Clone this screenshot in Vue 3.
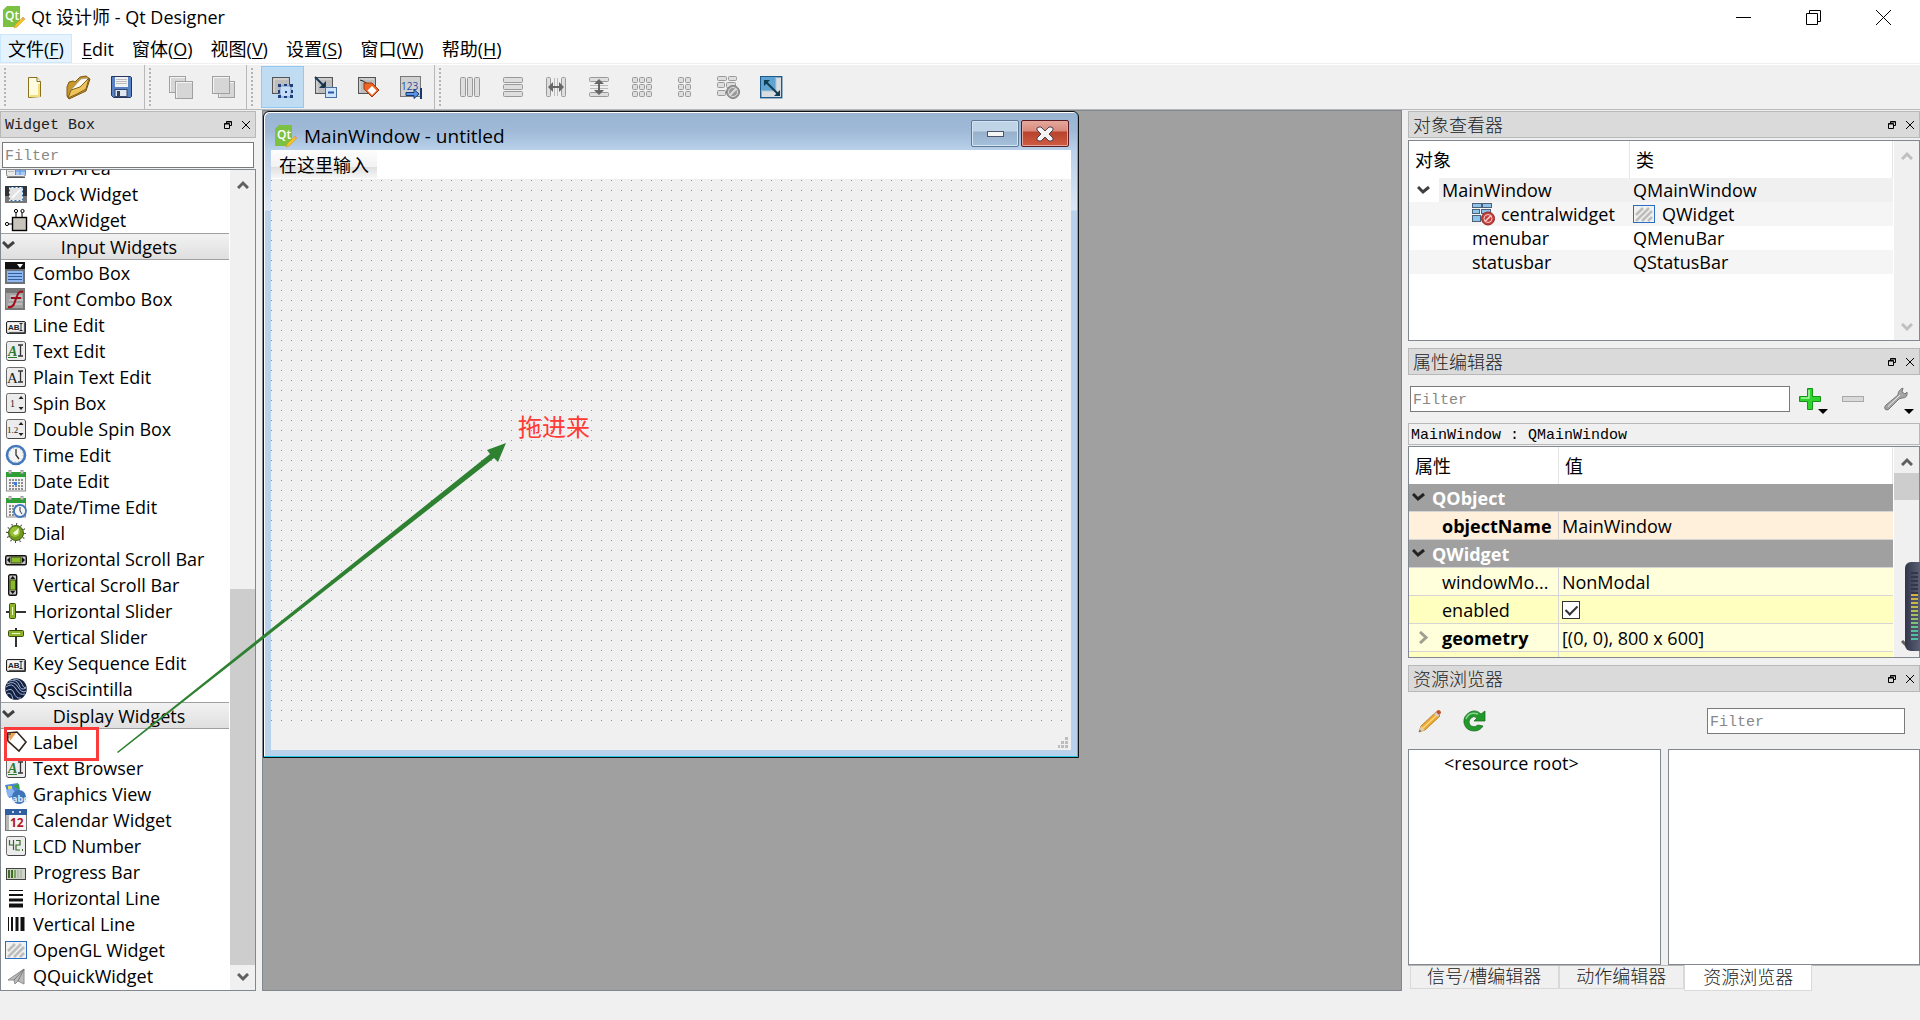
<script setup>
import { ref } from 'vue'

const abi = `<rect x="1.5" y="7.5" width="19" height="12" rx="1.5" fill="#cfcfcf" stroke="#222"/><rect x="2.5" y="8.5" width="16" height="9" fill="#f4f4f4"/><path d="M20 9v10H4" stroke="#333" stroke-width="1.5" fill="none"/><text x="3" y="16" font-size="8" font-weight="700" font-family="Liberation Sans, sans-serif" fill="#222">AB</text><path d="M14.5 9.5h3M16 9.5v7M14.5 16.5h3" stroke="#222"/>`
const page = `<rect x="1.5" y="1.5" width="19" height="19" rx="2" fill="#ececec" stroke="#6b6b6b"/><path d="M20.5 3v16.5q0 1-1 1H3" stroke="#444" fill="none"/>`
const cursor = `<path d="M13 5h5M15.5 5v11M13 16h5" stroke="#333" stroke-width="1.3" fill="none"/>`
const richText = page + `<text x="3" y="16" font-size="14" font-weight="700" font-style="italic" font-family="Liberation Serif, serif" fill="#2c7a32">A</text><path d="M3 17.5h9" stroke="#2c7a32"/>` + cursor
const spinArrows = `<path d="M13.5 7h5l-2.5-3zM13.5 15h5l-2.5 3z" fill="#222"/>`
const hatch = `<rect x=".5" y="2.5" width="21" height="17" fill="#f1f1ef" stroke="#2b6cc4"/><path d="M3 12l7-7M3 18L16 5M9 18L19 8M15 18l4-4" stroke="#bdbdbd" stroke-width="2.6"/>`
const calendar = `<rect x="1.5" y="4" width="19" height="17" fill="#f3f3f3" stroke="#8d8d8d"/><path d="M1 2h20v5H1z" fill="#2f9e35"/><path d="M5 0v4M17 0v4" stroke="#999" stroke-width="3"/><path d="M5 1v2M17 1v2" stroke="#eee"/><path d="M4 10h14M4 13h14M4 16h14M4 19h14" stroke="#8f8f8f" stroke-width="2" stroke-dasharray="2 1"/>`
const graySquare = (x, y, s) => `<rect x="${x + .5}" y="${y + .5}" width="${s}" height="${s}" fill="#d6d6d6" stroke="#a0a0a0"/><path d="M${x + 1.5} ${y + s}V${y + 1.5}H${x + s}" stroke="#f4f4f4" fill="none"/>`
const darkSquare = `<rect x="1.5" y="1.5" width="17" height="16" fill="#bdbdbd" stroke="#555"/><path d="M3 16V3h14" stroke="#ddd" fill="none"/>`
const cell = (x, y, w, h) => `<rect x="${x + .5}" y="${y + .5}" width="${w - 1}" height="${h - 1}" rx="1" fill="#dedede" stroke="#999"/>`
const cells = (xs, ys) => ys.map(y => xs.map(x => cell(x, y, 6, 6)).join('')).join('')

const icons = {
  qt: `<path d="M4 0h13v17l-4 4H0V4z" fill="#7cc142"/><text x="2" y="14" font-size="12" font-weight="600" font-family="Open Sans, sans-serif" fill="#fff">Qt</text><path d="M20 11l2 2-8 8-3 1 1-3z" fill="#f6c324" stroke="#c69214" stroke-width=".5"/><path d="M20 11l2 2-1 1-2-2z" fill="#d99"/>`,
  newFile: `<path d="M4.5 1.5H13l3.5 4v15l-12 1z" fill="#fffbe0" stroke="#8a6f1c"/><path d="M13 1.5v4h3.5" fill="#fff" stroke="#8a6f1c"/><path d="M15 8v12H6" stroke="#f2df7c" stroke-width="2" fill="none"/>`,
  open: `<path d="M0 11l2-5 4-1 2 1 5-5 6-1 4 3-4 12-17 8-2-3z" fill="#c8972c" stroke="#7d5a14"/><path d="M3 15L14 3l7-1-5 10-10 6z" fill="#fdfdf6" stroke="#999" stroke-width=".7"/><path d="M1 22l3-8 9-3 9-9-3 11-9 5z" fill="#edc35a" stroke="#85611a"/>`,
  save: `<path d="M1.5.5h19l1 1v19l-1 1h-17l-2-2z" fill="#5783c4" stroke="#26355c"/><rect x="5" y="1" width="13" height="10" fill="#f1f1f1"/><path d="M6 3.5h11M6 5.5h11M6 7.5h11" stroke="#bbb"/><rect x="5" y="13.5" width="12" height="7" fill="#dfe6f2" stroke="#33466f"/><rect x="7" y="15" width="3" height="5" fill="#345"/>`,
  lower: graySquare(0, 0, 16) + graySquare(6, 5, 17),
  raise: graySquare(6, 5, 16) + graySquare(0, 0, 17),
  widgets: darkSquare + `<rect x="9" y="10" width="11" height="11" fill="#c5dbf8" stroke="#7a9cc8"/><path d="M7 8h3v3H7zM19 8h3v3h-3zM7 19h3v3H7zM19 19h3v3h-3zM13 8h3v2h-3zM13 20h3v2h-3zM7 14h2v3H7zM20 14h2v3h-2zM14 15h2v2h-2z" fill="#1f3f7c"/>`,
  signals: darkSquare + `<path d="M1 1l10 10" stroke="#17354f" stroke-width="2"/><path d="M12 5v7H5z" fill="#17354f"/><rect x="11.5" y="11.5" width="11" height="10" fill="#cfe4ff" stroke="#496f9f"/><path d="M14 16.5h6" stroke="#2857a0" stroke-width="2"/>`,
  buddies: darkSquare + `<path d="M3 4l3 1 5 3" stroke="#222" fill="none"/><path d="M7 7h8l7 7-7 7-8-8z" fill="#ed6425" stroke="#9c3b10"/><path d="M15 10l4.5 4.5-4.5 4.5-4.5-4.5z" fill="#fff"/>`,
  taborder: `<rect x=".5" y=".5" width="20" height="20" fill="#d0d0d0" stroke="#777"/><text x="1" y="14" font-size="10" font-family="Open Sans, sans-serif" fill="#1c4ea0">123</text><path d="M6 16.5h8v-3l5 4.500-5 4.500v-3H6z" fill="#5a94e8" stroke="#16396f"/><path d="M21 12v11" stroke="#16396f" stroke-width="2"/>`,
  columns: cell(1, 1, 6, 20) + cell(8, 1, 6, 20) + cell(15, 1, 6, 20),
  rows: cell(1, 1, 20, 6) + cell(1, 8, 20, 6) + cell(1, 15, 20, 6),
  hsplit: cell(1, 1, 5, 20) + cell(16, 1, 5, 20) + `<path d="M9.5 2v18M12.5 2v18" stroke="#bbb"/><path d="M3 11l5-5v4h6V6l5 5-5 5v-4H8v4z" fill="#666"/>`,
  vsplit: cell(1, 1, 20, 5) + cell(1, 16, 20, 5) + `<path d="M2 9.5h18M2 12.5h18" stroke="#bbb"/><path d="M11 3l5 5h-4v6h4l-5 5-5-5h4V8H6z" fill="#666"/>`,
  grid: cells([1, 8, 15], [1, 8, 15]),
  form: cells([4, 11], [1, 8, 15]),
  breakLayout: cell(0, 0, 10, 5) + cell(11, 0, 9, 5) + cell(0, 6, 8, 6) + cell(9, 6, 10, 6) + cell(0, 14, 9, 6) + `<circle cx="16" cy="16" r="6.5" fill="#999" stroke="#808080"/><path d="M12.5 19.5l7-7" stroke="#ddd" stroke-width="2"/><circle cx="16" cy="16" r="4.5" stroke="#ddd" fill="none"/>`,
  adjust: `<rect x=".7" y=".7" width="21" height="21" fill="#d9dde0" stroke="#1c5a8c" stroke-width="1.4"/><rect x="1" y="1" width="15" height="14" fill="#5fa3d3"/><path d="M16 1v14H1" stroke="#b5c6d3" fill="none"/><path d="M6 6l12 12" stroke="#0f3d4f" stroke-width="2"/><path d="M4 4h6L4 10zM20 20v-6l-6 6z" fill="#0f3d4f"/>`,
  mdi: `<rect x="1.5" y="1.5" width="19" height="18" rx="2" fill="#e9e9e9" stroke="#888"/><rect x="10" y="9" width="10" height="9" fill="#a9c9f5"/><path d="M10.5 9v9M15 10v8M10 14h10" stroke="#5b8fd8"/><path d="M3 14.5h6" stroke="#bbb"/><path d="M2 20.5h18" stroke="#555"/>`,
  dock: `<rect y="3" width="22" height="17" fill="#303338"/><rect y="13" width="22" height="7" fill="#777"/><rect x="4.5" y="4.5" width="13" height="13" fill="#e2e2e2" stroke="#fff"/><rect x="4.5" y="4.5" width="13" height="13" fill="none" stroke="#2c6fb8" stroke-dasharray="2 2"/><path d="M7 15l8-8" stroke="#fafafa" stroke-width="2"/>`,
  ax: `<rect x="7.5" y="8.5" width="14" height="13" fill="#c9c4bb" stroke="#000" stroke-width="1.4"/><path d="M8 15H3M11 8V3M17 8V3" stroke="#000"/><circle cx="2" cy="15" r="1.6" fill="#fff" stroke="#000"/><circle cx="11" cy="2" r="1.6" fill="#fff" stroke="#000"/><circle cx="17.5" cy="2" r="1.6" fill="#fff" stroke="#000"/>`,
  combo: `<rect width="20" height="22" fill="#6d7278"/><rect width="20" height="7" fill="#111"/><path d="M12 2h6l-3 4z" fill="#fff"/><rect x="2" y="9" width="16" height="11" fill="#8db7ee"/><path d="M3 11.5h14M3 14.5h14M3 17.5h14" stroke="#315f9d"/>`,
  font: `<rect width="20" height="22" fill="#777"/><rect x="1" y="5" width="17" height="15" fill="#a2a2a2"/><path d="M5 8h12M4 12h14M3 16h14" stroke="#bcbcbc" stroke-width="2"/><path d="M18 4q-4-2-6 4l-3 8q-2 4-6 3M6 10h10" stroke="#a10d18" stroke-width="2" fill="none"/>`,
  abi,
  textEdit: richText,
  plain: page + `<text x="2" y="17" font-size="15" font-family="Liberation Serif, serif" fill="#222">A</text>` + cursor,
  spin: page + `<text x="5" y="15" font-size="10" font-family="Liberation Serif, serif" fill="#222">1</text>` + spinArrows,
  dspin: page + `<text x="2" y="15" font-size="9" font-family="Liberation Serif, serif" fill="#222">1.2</text>` + spinArrows,
  clock: `<circle cx="11" cy="11" r="9" fill="#f5f5f5" stroke="#4379bd" stroke-width="2.6"/><circle cx="11" cy="11" r="7" fill="none" stroke="#aaa" stroke-dasharray="1 2.7"/><path d="M11 5v6l3 4" stroke="#333" stroke-width="1.3" fill="none"/>`,
  date: calendar + `<rect x="9" y="12" width="3" height="3" fill="#3a7bea"/>`,
  datetime: calendar + `<circle cx="15" cy="15" r="6" fill="#f5f5f5" stroke="#4379bd" stroke-width="1.8"/><path d="M15 11v4l2 3" stroke="#333" fill="none"/>`,
  dial: `<circle cx="11" cy="11" r="9" fill="none" stroke="#444" stroke-width="2" stroke-dasharray="1 3.7"/><circle cx="11" cy="11" r="7.5" fill="#6f9a1e" stroke="#3f5c10"/><circle cx="10" cy="10" r="5" fill="#98c235"/><path d="M14 6l-1 6-3 1-2-2z" fill="#f5fbe0"/>`,
  hscroll: `<rect x=".7" y="7.7" width="20.6" height="9" rx="1.5" fill="#c8c8c8" stroke="#111" stroke-width="1.4"/><rect x="6" y="9" width="10" height="6" fill="#8bb92d" stroke="#3a4d12"/><path d="M2 12l3-3v6zM20 12l-3-3v6z" fill="#111"/>`,
  vscroll: `<rect x="3.7" y=".7" width="8" height="20.6" rx="1.5" fill="#c8c8c8" stroke="#111" stroke-width="1.4"/><rect x="5" y="6" width="5.5" height="10" fill="#8bb92d" stroke="#3a4d12"/><path d="M7.7 2l2.5 3h-5zM7.7 20l2.5-3h-5z" fill="#111"/>`,
  hslider: `<path d="M1 12h20" stroke="#333" stroke-width="2"/><rect x="4.5" y="3.5" width="6" height="15" rx="1" fill="#8eb52a" stroke="#3a4d12"/><path d="M7.5 7v8" stroke="#eef8cc"/>`,
  vslider: `<path d="M11 2v19" stroke="#333" stroke-width="2"/><rect x="3.5" y="4.5" width="15" height="6" rx="1" fill="#8eb52a" stroke="#3a4d12"/><path d="M7 7.5h8" stroke="#eef8cc"/>`,
  scintilla: `<circle cx="11" cy="11" r="10.8" fill="#14203d"/><path d="M1 9q6-5 10 2t9 5M2 6q7-4 11 3t8 4M4 3q8-2 10 4t7 3M1 13q6-4 8 2t7 5M2 16q4-3 6 5M8 1q7 0 9 5t4 3" stroke="#9db4dc" fill="none"/>`,
  label: `<path d="M2 2l10-1 9 10-7 9L3 10z" fill="#fff" stroke="#33261c" stroke-width="1.6"/><path d="M3 2l8 0-6 8z" fill="#f0a057"/><path d="M0 3h6M3 3v4" stroke="#222"/>`,
  graphics: `<path d="M0 2l13-2 2 12-11 3z" fill="#4f86d9"/><path d="M1 8l5-4 4 5-3 4-4 1z" fill="#8ab4ee"/><path d="M3 3h4v3H3z" fill="#e9dc3a"/><path d="M8 3l6-2 1 6z" fill="#37a53e"/><circle cx="14" cy="14" r="7" fill="#3d75b8"/><text x="7" y="19" font-size="9" font-weight="700" font-family="Open Sans, sans-serif" fill="#d9ebff">abc</text>`,
  calWidget: `<rect x=".5" y=".5" width="21" height="21" fill="#f6f6f6" stroke="#777"/><path d="M0 0h22v6H0z" fill="#2f5f9f"/><path d="M1 6h3v15H1z" fill="#b7b7b7"/><path d="M7 3h2M14 3h2" stroke="#fff" stroke-width="1.5"/><text x="5" y="18" font-size="12" font-weight="700" font-family="Open Sans, sans-serif" fill="#b3161b">12</text>`,
  lcd: page + `<path d="M4.5 5v5h4M8.5 5v10M11 5.5h4v4.5h-4v5h4" stroke="#376b2b" stroke-width="1.2" fill="none"/><path d="M17 14h1v2h-1z" fill="#376b2b"/>`,
  progress: `<rect x="1.5" y="7.5" width="19" height="11" fill="#cfd4c9" stroke="#444"/><path d="M4 9v8M7 9v8" stroke="#3f6f24" stroke-width="2"/><path d="M10 9v8" stroke="#7da364" stroke-width="2"/><path d="M13 9v8M16 9v8" stroke="#b5bfae" stroke-width="2"/>`,
  hline: `<path d="M4 3.5h14" stroke="#111"/><path d="M4 8h14" stroke="#111" stroke-width="2"/><path d="M4 13h14" stroke="#111" stroke-width="3"/><path d="M4 18.5h14" stroke="#111" stroke-width="4"/>`,
  vline: `<path d="M3.5 4v14" stroke="#111"/><path d="M7 4v14" stroke="#111" stroke-width="2"/><path d="M12 4v14" stroke="#111" stroke-width="3"/><path d="M17.5 4v14" stroke="#111" stroke-width="4"/>`,
  hatch,
  quick: `<path d="M3 15L19 4v15l-6-3-3 3-1-4z" fill="#bcbcbc" stroke="#8c8c8c"/><path d="M9 15L19 4l-6 12" fill="none" stroke="#777"/>`,
  central: `<g fill="#8fc4ea" stroke="#4b6079"><rect x=".5" y=".5" width="9" height="4"/><rect x="10.5" y=".5" width="9" height="4"/><rect x=".5" y="6.5" width="7" height="4"/><rect x="9.5" y="6.5" width="9" height="4"/><rect x=".5" y="12.5" width="8" height="6"/></g><circle cx="16" cy="15.5" r="6.5" fill="#c93e3a" stroke="#8e2522"/><circle cx="16" cy="15.5" r="4" fill="none" stroke="#f3d0cf"/><path d="M13 18.5l6-6" stroke="#f3d0cf" stroke-width="1.6"/>`,
  plus: `<path d="M8.5.5h5v8h8v5h-8v8h-5v-8h-8v-5h8z" fill="#2ed32e" stroke="#149414"/><path d="M10 2v8H2" stroke="#aef5a6" stroke-width="1.5" fill="none"/>`,
  minus: `<rect x=".5" y="8.5" width="21" height="5" fill="#d9d9d9" stroke="#a8a8a8"/>`,
  wrench: `<path d="M0 21q-1-2 1-4L13 7q0-5 5-7l-1 4 3 2 2-2q1 6-5 6l-3 1L4 21q-2 2-4 0z" fill="#a5a5a5" stroke="#777"/><path d="M3 18.5L15 7" stroke="#eee"/>`,
  pencil: `<path d="M0 22l2-6L17 2l4 4L6 20z" fill="#f0a92d" stroke="#9a6a15" stroke-width=".7"/><path d="M4 18L19 4" stroke="#fbd98a" stroke-width="1.3"/><path d="M15 4l4-4 3 3-3 4z" fill="#cfcfcf"/><path d="M17 2l2-2q3 0 3 3l-2 2z" fill="#c4532c"/><path d="M0 22l2-6 4 4z" fill="#e6cfa0"/><path d="M0 22l1-2 1 1z" fill="#333"/>`,
  refresh: `<path d="M18 4q-5-5-11-2Q0 6 1 13q2 8 10 8 6 0 9-5l-5-1q-3 3-7 1-4-4 0-8 3-3 6 0l-3 3h11V1z" fill="#229a2b" stroke="#116518" stroke-width=".7"/><path d="M3 9q3-8 12-5" stroke="#8fd493" fill="none" stroke-width="1.5"/>`
}

const menus = [['文件', 'F'], ['', 'E', 'dit'], ['窗体', 'O'], ['视图', 'V'], ['设置', 'S'], ['窗口', 'W'], ['帮助', 'H']]
const toolGroups = [
  ['newFile', 'open', 'save'],
  ['lower', 'raise'],
  ['widgets', 'signals', 'buddies', 'taborder'],
  ['columns', 'rows', 'hsplit', 'vsplit', 'grid', 'form', 'breakLayout', 'adjust']
]
const widgets = [
  { name: 'MDI Area', icon: 'mdi' }, { name: 'Dock Widget', icon: 'dock' }, { name: 'QAxWidget', icon: 'ax' },
  { name: 'Input Widgets', group: true },
  { name: 'Combo Box', icon: 'combo' }, { name: 'Font Combo Box', icon: 'font' }, { name: 'Line Edit', icon: 'abi' },
  { name: 'Text Edit', icon: 'textEdit' }, { name: 'Plain Text Edit', icon: 'plain' }, { name: 'Spin Box', icon: 'spin' },
  { name: 'Double Spin Box', icon: 'dspin' }, { name: 'Time Edit', icon: 'clock' }, { name: 'Date Edit', icon: 'date' },
  { name: 'Date/Time Edit', icon: 'datetime' }, { name: 'Dial', icon: 'dial' }, { name: 'Horizontal Scroll Bar', icon: 'hscroll' },
  { name: 'Vertical Scroll Bar', icon: 'vscroll' }, { name: 'Horizontal Slider', icon: 'hslider' }, { name: 'Vertical Slider', icon: 'vslider' },
  { name: 'Key Sequence Edit', icon: 'abi' }, { name: 'QsciScintilla', icon: 'scintilla' },
  { name: 'Display Widgets', group: true },
  { name: 'Label', icon: 'label' }, { name: 'Text Browser', icon: 'textEdit' }, { name: 'Graphics View', icon: 'graphics' },
  { name: 'Calendar Widget', icon: 'calWidget' }, { name: 'LCD Number', icon: 'lcd' }, { name: 'Progress Bar', icon: 'progress' },
  { name: 'Horizontal Line', icon: 'hline' }, { name: 'Vertical Line', icon: 'vline' }, { name: 'OpenGL Widget', icon: 'hatch' },
  { name: 'QQuickWidget', icon: 'quick' }
]
const tabs = ['信号/槽编辑器', '动作编辑器', '资源浏览器']
const activeTab = ref('资源浏览器')
const enabled = ref(true)
const widgetFilter = ref('')
const propertyFilter = ref('')
const resourceFilter = ref('')
</script>

<template>
  <div class="designer">
    <header class="titlebar">
      <svg class="icon" viewBox="0 0 22 22" v-html="icons.qt"></svg>
      <h1>Qt 设计师 - Qt Designer</h1>
      <div class="controls">
        <button type="button" aria-label="Minimize"><svg width="15" height="15"><path d="M0 7.5h15" /></svg></button>
        <button type="button" aria-label="Restore"><svg width="15" height="15"><path d="M.5 3.5h11v11H.5zM3.5 3.5V.5h11v11h-3" /></svg></button>
        <button type="button" aria-label="Close"><svg width="15" height="15"><path d="M0 0l15 15M15 0L0 15" /></svg></button>
      </div>
    </header>

    <nav class="menubar">
      <button v-for="(m, i) in menus" :key="i" type="button" :class="{ hot: i === 0 }">
        <template v-if="m[0]">{{ m[0] }}(<u>{{ m[1] }}</u>)</template>
        <template v-else><u>{{ m[1] }}</u>{{ m[2] }}</template>
      </button>
    </nav>

    <div class="toolbar">
      <div v-for="(g, gi) in toolGroups" :key="gi" class="tool-group">
        <button v-for="t in g" :key="t" type="button" :aria-label="t" :class="{ checked: t === 'widgets' }">
          <svg class="icon" viewBox="0 0 22 22" v-html="icons[t]"></svg>
        </button>
      </div>
    </div>

    <main class="workspace">
      <aside class="left-dock">
        <div class="dock-title mono">
          <h2>Widget Box</h2>
          <button type="button" aria-label="Float"><svg width="8" height="8"><path d="M2.5 2V.5h5v4H6M.5 2.5h5v5h-5zM.5 3h5M2.5 1h5" /></svg></button>
          <button type="button" aria-label="Close"><svg width="8" height="8"><path d="M0 0l8 8M8 0L0 8" /></svg></button>
        </div>
        <input v-model="widgetFilter" class="filter mono" type="text" placeholder="Filter" aria-label="Widget filter">
        <div class="widget-box">
          <ul class="widget-list">
            <li v-for="w in widgets" :key="w.name" :class="{ group: w.group }">
              <svg v-if="w.group" class="chevron" viewBox="0 0 13 9"><path d="M1 1l5 5 6-5" /></svg>
              <svg v-else class="icon" viewBox="0 0 22 22" v-html="icons[w.icon]"></svg>
              <span>{{ w.name }}</span>
            </li>
          </ul>
          <div class="scroll">
            <svg class="arrow" viewBox="0 0 12 9"><path d="M1 8l5-5 5 5" /></svg>
            <div class="track low"><div class="thumb"></div></div>
            <svg class="arrow" viewBox="0 0 12 9"><path d="M1 1l5 5 5-5" /></svg>
          </div>
        </div>
      </aside>

      <section class="mdi-area">
        <div class="form-window">
          <div class="form-title">
            <svg class="icon" viewBox="0 0 22 22" v-html="icons.qt"></svg>
            <h2>MainWindow - untitled</h2>
            <button class="aero" type="button" aria-label="Minimize form"><svg width="17" height="6"><rect x=".5" y=".5" width="16" height="5" fill="#f5f5f5" stroke="#4b5566" /></svg></button>
            <button class="aero close" type="button" aria-label="Close form"><svg width="18" height="16" viewBox="0 0 18 16"><path d="M1 2L3 1h2l4 4 4-4h2l2 1v2l-4 4 4 4v2l-2 1h-2l-4-4-4 4H3l-2-1v-2l4-4-4-4z" fill="#f3f3f3" stroke="#4b3f52" /></svg></button>
          </div>
          <div class="form-menu"><button type="button">在这里输入</button></div>
          <div class="form-canvas"></div>
          <div class="form-status">
            <svg width="10" height="11"><path d="M7 0h3v3H7zM3 4h3v3H3zM7 4h3v3H7zM0 8h2v3H0zM3 8h3v3H3zM7 8h3v3H7z" fill="#bdbdbd" /></svg>
          </div>
        </div>
      </section>

      <aside class="right-dock">
        <div class="dock-title">
          <h2>对象查看器</h2>
          <button type="button" aria-label="Float"><svg width="8" height="8"><path d="M2.5 2V.5h5v4H6M.5 2.5h5v5h-5zM.5 3h5M2.5 1h5" /></svg></button>
          <button type="button" aria-label="Close"><svg width="8" height="8"><path d="M0 0l8 8M8 0L0 8" /></svg></button>
        </div>
        <div class="view inspector">
          <table>
            <colgroup><col class="c-object"><col></colgroup>
            <thead><tr><th>对象</th><th>类</th></tr></thead>
            <tbody>
              <tr class="current">
                <td class="root"><div class="cell"><svg class="chevron" viewBox="0 0 13 9"><path d="M1 1l5 5 6-5" /></svg>MainWindow</div></td>
                <td><div class="cell">QMainWindow</div></td>
              </tr>
              <tr class="alt">
                <td class="child"><div class="cell"><svg class="icon" viewBox="0 0 22 22" v-html="icons.central"></svg>centralwidget</div></td>
                <td><div class="cell"><svg class="icon" viewBox="0 0 22 22" v-html="icons.hatch"></svg>QWidget</div></td>
              </tr>
              <tr><td class="child"><div class="cell">menubar</div></td><td><div class="cell">QMenuBar</div></td></tr>
              <tr class="alt"><td class="child"><div class="cell">statusbar</div></td><td><div class="cell">QStatusBar</div></td></tr>
            </tbody>
          </table>
          <div class="scroll disabled">
            <svg class="arrow" viewBox="0 0 12 9"><path d="M1 8l5-5 5 5" /></svg>
            <svg class="arrow" viewBox="0 0 12 9"><path d="M1 1l5 5 5-5" /></svg>
          </div>
        </div>

        <div class="dock-title spaced">
          <h2>属性编辑器</h2>
          <button type="button" aria-label="Float"><svg width="8" height="8"><path d="M2.5 2V.5h5v4H6M.5 2.5h5v5h-5zM.5 3h5M2.5 1h5" /></svg></button>
          <button type="button" aria-label="Close"><svg width="8" height="8"><path d="M0 0l8 8M8 0L0 8" /></svg></button>
        </div>
        <div class="prop-tools">
          <input v-model="propertyFilter" class="filter mono" type="text" placeholder="Filter" aria-label="Property filter">
          <button type="button" aria-label="Add property"><svg class="icon" viewBox="0 0 22 22" v-html="icons.plus"></svg><i class="drop"></i></button>
          <button type="button" aria-label="Remove property"><svg class="icon" viewBox="0 0 22 22" v-html="icons.minus"></svg></button>
          <button type="button" aria-label="Configure"><svg class="icon" viewBox="0 0 22 22" v-html="icons.wrench"></svg><i class="drop"></i></button>
        </div>
        <p class="object-line mono">MainWindow : QMainWindow</p>
        <div class="view properties">
          <table>
            <colgroup><col class="c-prop"><col></colgroup>
            <thead><tr><th>属性</th><th>值</th></tr></thead>
            <tbody>
              <tr class="section"><td colspan="2"><div class="cell"><svg class="chevron" viewBox="0 0 13 9"><path d="M1 1l5 5 6-5" /></svg>QObject</div></td></tr>
              <tr class="peach"><td class="name"><b>objectName</b></td><td>MainWindow</td></tr>
              <tr class="section"><td colspan="2"><div class="cell"><svg class="chevron" viewBox="0 0 13 9"><path d="M1 1l5 5 6-5" /></svg>QWidget</div></td></tr>
              <tr class="pale"><td class="name">windowMo...</td><td>NonModal</td></tr>
              <tr class="yellow"><td class="name"><label for="enabled">enabled</label></td><td><input id="enabled" v-model="enabled" type="checkbox"></td></tr>
              <tr class="pale"><td class="expandable"><div class="cell"><svg class="chevron side" viewBox="0 0 9 13"><path d="M1 1l6 5.5L1 12" /></svg><b>geometry</b></div></td><td>[(0, 0), 800 x 600]</td></tr>
              <tr class="yellow"><td></td><td></td></tr>
            </tbody>
          </table>
          <div class="scroll">
            <svg class="arrow" viewBox="0 0 12 9"><path d="M1 8l5-5 5 5" /></svg>
            <div class="track"><div class="thumb short"></div></div>
            <svg class="arrow" viewBox="0 0 12 9"><path d="M1 1l5 5 5-5" /></svg>
          </div>
          <div class="meter"><div class="bars"></div><div class="bars lit"></div></div>
        </div>

        <div class="dock-title spaced">
          <h2>资源浏览器</h2>
          <button type="button" aria-label="Float"><svg width="8" height="8"><path d="M2.5 2V.5h5v4H6M.5 2.5h5v5h-5zM.5 3h5M2.5 1h5" /></svg></button>
          <button type="button" aria-label="Close"><svg width="8" height="8"><path d="M0 0l8 8M8 0L0 8" /></svg></button>
        </div>
        <div class="res-tools">
          <button type="button" aria-label="Edit resources"><svg class="icon" viewBox="0 0 22 22" v-html="icons.pencil"></svg></button>
          <button type="button" aria-label="Reload"><svg class="icon" viewBox="0 0 22 22" v-html="icons.refresh"></svg></button>
          <input v-model="resourceFilter" class="filter mono" type="text" placeholder="Filter" aria-label="Resource filter">
        </div>
        <div class="res-panes">
          <div class="view">&lt;resource root&gt;</div>
          <div class="view"></div>
        </div>
        <div class="tabs" role="tablist">
          <button v-for="t in tabs" :key="t" type="button" role="tab" :aria-selected="t === activeTab" :class="{ active: t === activeTab }" @click="activeTab = t">{{ t }}</button>
        </div>
      </aside>
    </main>

    <div class="mark-box"></div>
    <svg class="mark-arrow" width="520" height="770" viewBox="0 0 520 770"><path d="M117 752L490 454L487 450L506 443L498 462L494 458L118 753z" fill="#2f8132" /></svg>
    <strong class="mark-text">拖进来</strong>
  </div>
</template>

<style>
body { margin: 0; background: #f0f0f0; }
</style>

<style scoped>
* { box-sizing: border-box; }
.designer {
  position: relative;
  display: flex;
  flex-direction: column;
  min-height: 100vh;
  padding-bottom: 29px;
  overflow: hidden;
  background: #f0f0f0;
  color: #000;
  font: 18px/24px "Open Sans", "Noto Sans CJK SC", sans-serif;
}
button { border: 0; padding: 0; background: none; font: inherit; color: inherit; display: flex; align-items: center; justify-content: center; }
h1, h2, p, ul { margin: 0; padding: 0; font: inherit; list-style: none; }
svg { display: block; flex: none; }
.icon { width: 22px; height: 22px; overflow: visible; }
.mono { font-family: "Liberation Mono", "Noto Sans CJK SC", monospace; font-size: 15px; }

.titlebar { display: flex; align-items: center; height: 34px; padding-left: 3px; background: #fff; }
.titlebar h1 { flex: 1; margin-left: 6px; }
.controls { display: flex; height: 34px; padding-right: 2px; }
.controls button { width: 70px; }
.controls svg { stroke: #000; fill: none; }

.menubar { display: flex; gap: 2px; height: 30px; background: #fff; border-bottom: 1px solid #f0f0f0; }
.menubar button { display: block; padding: 0 7px; height: 29px; line-height: 29px; border: 1px solid transparent; white-space: nowrap; }
.menubar .hot { background: #e5f3ff; border-color: #cce8ff; }
.menubar u { text-underline-offset: 2px; text-decoration-thickness: 1px; }

.toolbar { display: flex; height: 46px; border-top: 1px solid #fff; border-bottom: 1px solid #b8b8b8; }
.tool-group { position: relative; display: flex; padding: 1px 1px 1px 14px; border-right: 1px solid #b8b8b8; }
.tool-group:last-child { border-right: 0; }
.tool-group::before {
  content: ""; position: absolute; left: 4px; top: 3px; bottom: 3px; width: 2px;
  background: repeating-linear-gradient(#b4b4b4 0 2px, transparent 2px 4px);
}
.tool-group button { width: 43px; padding-right: 1px; border: 1px solid transparent; }
.tool-group .checked { background: #c0dcf3; border-color: #90c8f6; }

.workspace { flex: 1; display: flex; }
.left-dock { display: flex; flex-direction: column; width: 256px; padding-top: 1px; }
.dock-title { display: flex; align-items: center; gap: 10px; height: 27px; padding: 0 5px 0 4px; border: 1px solid #b8b8b8; background: #dadada; color: #222; font-weight: 300; }
.dock-title.mono { font-weight: 400; }
.dock-title.mono h2 { padding-top: 3px; }
.dock-title.spaced { margin-top: 7px; }
.dock-title h2 { flex: 1; }
.dock-title button svg { stroke: #000; stroke-width: 1; fill: none; }
.filter { height: 26px; border: 1px solid #7a7a7a; border-radius: 0; padding: 3px 2px 0; background: #fff; min-width: 0; outline: 0; }
.filter::placeholder { color: #888; opacity: 1; }
.left-dock .filter { margin: 4px 2px 1px; }
.view { background: #fff; border: 1px solid #828790; }
.widget-box { flex: 1; display: flex; border: 1px solid #828790; background: #fff; overflow: hidden; }
.widget-list { flex: 1; display: flex; flex-direction: column; justify-content: flex-end; margin-top: -18px; padding-bottom: 1px; }
.widget-list li { display: flex; flex: none; align-items: center; gap: 6px; height: 26px; padding-left: 4px; white-space: nowrap; }
.widget-list .group { position: relative; justify-content: center; height: 27px; margin-right: 1px; padding-left: 8px; border: 1px solid #a0a0a0; border-width: 1px 0; background: linear-gradient(#f2f2f2, #dfdfdf); }
.chevron { width: 13px; height: 9px; fill: none; stroke: #404040; stroke-width: 3; }
.group .chevron { position: absolute; left: 1px; top: 7px; }
.scroll { display: flex; flex-direction: column; align-items: center; justify-content: space-between; width: 25px; padding: 10px 0 8px; background: #f0f0f0; }
.arrow { width: 12px; height: 9px; fill: none; stroke: #606060; stroke-width: 3; }
.scroll.disabled .arrow { stroke: #bfbfbf; }
.track { flex: 1; display: flex; flex-direction: column; width: 100%; margin: 7px 0 8px; }
.track.low { justify-content: flex-end; }
.thumb { height: 376px; background: #cdcdcd; }
.thumb.short { height: 27px; }

.mdi-area { position: relative; flex: 1; min-width: 0; margin: 0 6px; border: 1px solid #828790; background: #a0a0a0; }
.form-window {
  position: absolute; left: 0; top: 0; width: 816px; padding: 1px 7px 7px;
  border: 1px solid #111; border-radius: 6px 6px 0 0;
  background: linear-gradient(#98b4d1 0, #a0bad8 20px, #b9d1ea 38px, #c0d4ec 50px, #dbe7f5 98px, #b9d1ea 99px);
  box-shadow: inset -1px -1px #24c8e6, inset 1px 1px #fff;
}
.form-title { display: flex; align-items: center; height: 37px; padding: 0 2px 0 4px; }
.form-title h2 { flex: 1; margin-left: 7px; padding-top: 8px; font-size: 19px; }
.form-title .icon { margin-top: 8px; }
.aero { width: 48px; height: 27px; margin-left: 2px; margin-top: 4px; border: 1px solid #5f7894; border-radius: 2px; box-shadow: inset 0 0 0 1px #d5e4f3; background: linear-gradient(#c0d4e8 0 10px, #97b1cd 11px, #a5c0dc); }
.aero.close { border-color: #5a1a22; box-shadow: inset 0 0 0 1px #e5a79d; background: linear-gradient(#e4a89c 0, #d98a7c 10px, #b8432c 11px, #cf5c42); }
.form-menu { display: flex; height: 29px; background: #fff; }
.form-menu button { width: 106px; height: 28px; padding-top: 2px; background: linear-gradient(#fdfdfd, #f2f2f2 60%, #e0e0e0 62%, #f6f6f6); }
.form-canvas {
  height: 542px;
  background-color: #f0f0f0;
  background-image: linear-gradient(90deg, transparent 1px, #f0f0f0 1px), linear-gradient(#8f8f8f 1px, #f0f0f0 1px);
  background-position: 0 1px;
  background-size: 10px 10px;
}
.form-status { display: flex; justify-content: flex-end; align-items: flex-end; height: 29px; padding: 0 3px 2px; background: #f0f0f0; }

.right-dock { display: flex; flex-direction: column; width: 512px; padding-top: 1px; }
.inspector, .properties { display: flex; }
.inspector { height: 201px; margin-top: 2px; }
.properties { position: relative; height: 212px; margin-top: 1px; }
table { flex: 1; align-self: flex-start; table-layout: fixed; border-collapse: separate; border-spacing: 0; width: 485px; margin-right: 1px; }
.c-object { width: 221px; }
.c-prop { width: 150px; }
th { height: 37px; padding: 0 6px; border-right: 1px solid #e5e5e5; text-align: left; font-weight: 400; }
td { height: 24px; padding: 0 0 0 3px; white-space: nowrap; overflow: hidden; }
.cell { display: flex; align-items: center; gap: 7px; height: 24px; }
.inspector .root { padding-left: 8px; background: linear-gradient(90deg, #fff 30px, transparent 30px); }
.root .cell { gap: 12px; }
.current { background: #f0f0f0; }
.alt { background: #f5f5f5; }
.inspector .child { padding-left: 63px; }

.prop-tools { display: flex; align-items: center; height: 48px; padding: 0 13px 0 2px; }
.prop-tools .filter { flex: 1; margin-right: 9px; }
.prop-tools button { position: relative; width: 22px; }
.prop-tools button + button { margin-left: 21px; }
.drop { position: absolute; right: -7px; bottom: -4px; border: 5px solid transparent; border-top-color: #000; border-bottom: 0; }
.object-line { height: 22px; padding: 2px 0 0 2px; border: 1px solid #b8b8b8; line-height: 20px; }
.properties table { height: 210px; display: block; overflow: hidden; }
.properties td { height: 28px; border-right: 1px solid #d5d5d5; border-bottom: 1px solid #d5d5d5; line-height: 24px; }
.properties td:last-child { width: 335px; border-right: 0; }
.properties th:last-child { width: 335px; }
.properties th:first-child { width: 150px; }
.properties .name { padding-left: 33px; }
.properties .expandable { padding-left: 10px; }
.expandable .cell { gap: 14px; }
.properties .section td { background: #a0a0a0; color: #fff; font-weight: 700; }
.section .chevron { stroke: #222; }
.chevron.side { width: 9px; height: 13px; stroke: #a0a091; }
.peach { background: #fff0dc; }
.pale { background: #ffffdc; }
.yellow { background: #ffffbf; }
input[type="checkbox"] { appearance: none; display: block; position: relative; width: 18px; height: 18px; margin: 0; border: 1px solid #333; background: #fff; }
input[type="checkbox"]:checked::before { content: ""; position: absolute; left: 5px; top: 1px; width: 5px; height: 10px; border: solid #333; border-width: 0 2px 2px 0; transform: rotate(45deg); }
.meter { position: absolute; right: -1px; bottom: 6px; display: flex; flex-direction: column; align-items: flex-end; width: 15px; height: 89px; padding: 10px 2px 0 0; border-radius: 6px 0 0 6px; background: linear-gradient(90deg, #33364a, #5a5f74); }
.bars { width: 7px; height: 22px; background: repeating-linear-gradient(#33374a 0 2px, transparent 2px 4px); }
.bars.lit { height: 48px; background: repeating-linear-gradient(transparent 0 2px, #4c5064 2px 4px), linear-gradient(#d8b040, #b8c050 35%, #50c0a0 80%); }

.res-tools { display: flex; align-items: center; gap: 22px; height: 57px; padding: 0 15px 0 11px; }
.res-tools .filter { width: 198px; margin-left: auto; }
.res-panes { flex: 1; display: flex; gap: 7px; min-height: 200px; }
.res-panes .view { flex: 1; padding: 1px 35px; }
.tabs { display: flex; align-items: flex-start; height: 26px; padding-left: 2px; border-top: 1px solid #b8b8b8; font-weight: 300; color: #222; }
.tabs button { height: 23px; padding: 0 17px 3px 16px; border: 1px solid #d9d9d9; border-top: 0; white-space: nowrap; }
.tabs .active { height: 26px; padding: 0 18px 1px; margin-top: -1px; background: #fff; }

.mark-box { position: absolute; left: 4px; top: 727px; width: 95px; height: 34px; border: 3px solid #fb3b3b; }
.mark-arrow { position: absolute; left: 0; top: 0; pointer-events: none; }
.mark-text { position: absolute; left: 518px; top: 411px; color: #ff3a35; font: 400 24px/30px "Noto Sans CJK SC", sans-serif; }
</style>
